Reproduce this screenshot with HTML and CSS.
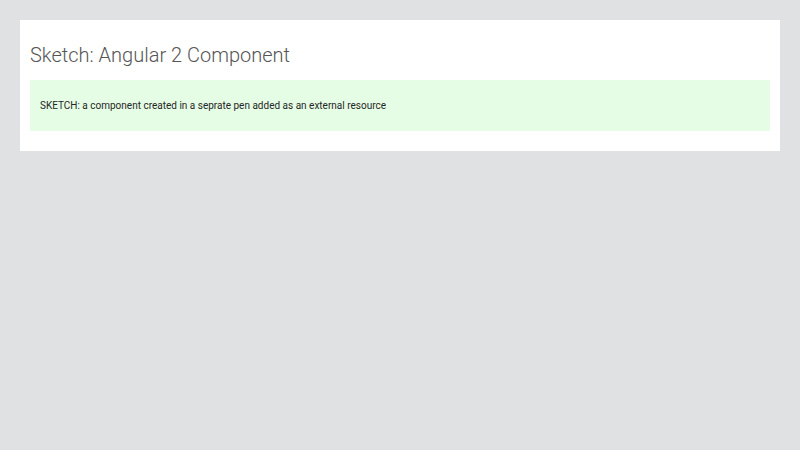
FILE: index.html
```html
<!DOCTYPE html>
<html>
<head>
<meta charset="utf-8">
<link rel="stylesheet" href="styles.css">
</head>
<body>
<div class="card">
  <h1 class="title">Sketch: Angular 2 Component</h1>
  <div class="sketch">SKETCH: a component created in a seprate pen added as an external resource</div>
</div>
</body>
</html>
```
FILE: styles.css
```css
html, body {
  margin: 0;
  padding: 0;
}
body {
  background: #e0e1e3;
  padding: 20px;
  font-family: Roboto, "Liberation Sans", sans-serif;
}
.card {
  background: #ffffff;
  padding: 10px 10px 20px;
}
.title {
  font-size: 20px;
  font-weight: 300;
  line-height: 23px;
  color: #555555;
  margin: 14px 0 13px;
}
.sketch {
  background: #e5fde5;
  color: #262626;
  font-size: 10px;
  line-height: 17px;
  padding: 17px 10px;
}
```
